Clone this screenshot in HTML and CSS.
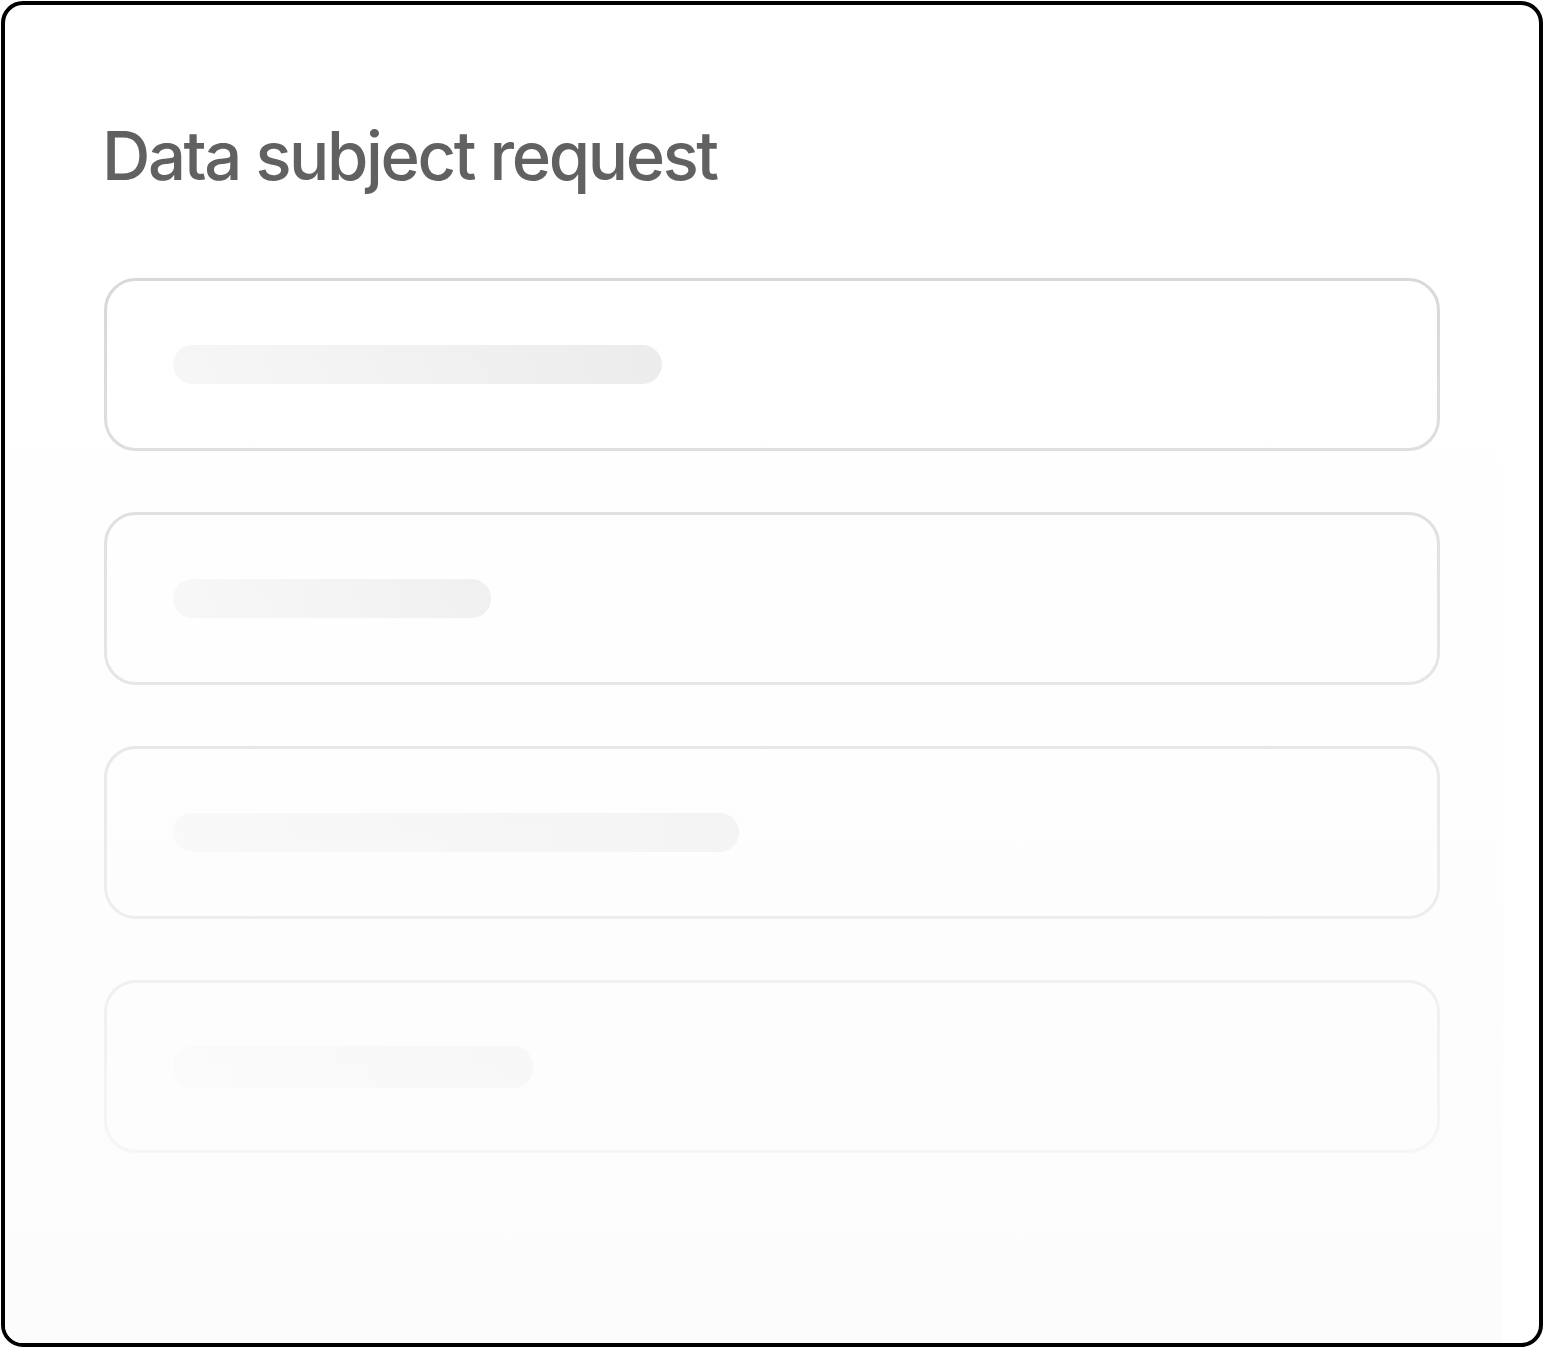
FILE: index.html
```html
<!DOCTYPE html>
<html lang="en">
<head>
<meta charset="utf-8">
<title>Data subject request</title>
<link rel="stylesheet" href="styles.css">
</head>
<body>
<div class="frame">
  <h1 class="title">Data subject request</h1>
  <div class="list">
    <div class="card"><div class="bar" style="width:489px"></div></div>
    <div class="card"><div class="bar" style="width:318px"></div></div>
    <div class="card"><div class="bar" style="width:566px"></div></div>
    <div class="card"><div class="bar bar-tall" style="width:360px"></div></div>
  </div>
  <div class="fade"></div>
</div>
</body>
</html>
```

FILE: styles.css
```css
* { box-sizing: border-box; }
html, body { margin: 0; padding: 0; background: #ffffff; }
body { width: 1544px; height: 1348px; padding: 1px; }

.frame {
  position: relative;
  width: 1542px;
  height: 1346px;
  border: 4px solid #000000;
  border-radius: 22px;
  background: #ffffff;
  padding: 117px 99px 0 99px;
  overflow: hidden;
  font-family: Inter, "Liberation Sans", sans-serif;
}

.title {
  margin: 0 0 89px -2px;
  font-size: 67px;
  line-height: 67px;
  font-weight: 500;
  color: #616161;
  letter-spacing: -2.4px;
}

.list {
  display: flex;
  flex-direction: column;
  gap: 61px;
}

.card {
  height: 173px;
  border: 3px solid #d9d9d9;
  border-radius: 32px;
  background: #ffffff;
  display: flex;
  align-items: center;
  padding-left: 66px;
}

.bar {
  height: 39px;
  border-radius: 20px;
  background: linear-gradient(to right, #f6f6f6, #ebebeb);
}

.bar-tall { height: 42px; }

.fade {
  position: absolute;
  left: 0;
  top: 0;
  width: 1498px;
  height: 100%;
  background: linear-gradient(to bottom, rgba(252,252,252,0) 0px, rgba(252,252,252,0) 290px, rgba(252,252,252,1) 100%);
  pointer-events: none;
}
```
